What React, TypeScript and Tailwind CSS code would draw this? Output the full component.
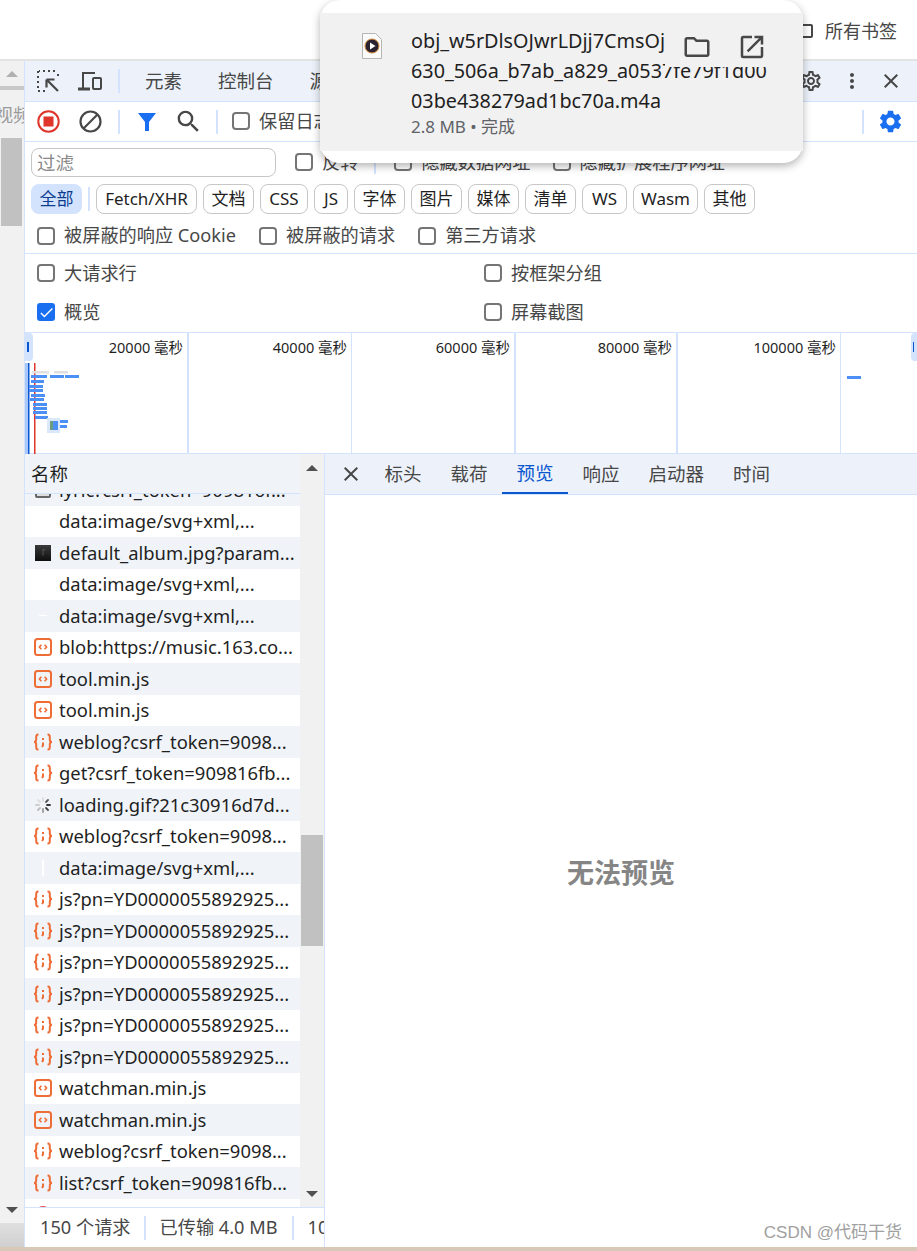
import React from 'react';
import { MdOutlineFolder, MdOpenInNew, MdSettings, MdOutlineSettings, MdClose, MdMoreVert, MdSearch, MdCheck } from 'react-icons/md';

type RowKind = 'none' | 'script' | 'json' | 'album' | 'spin' | 'thumb' | 'dash' | 'vline' | 'red';

const rows: { name: string; kind: RowKind }[] = [
  { name: 'lyric?csrf_token=909816f...', kind: 'thumb' },
  { name: 'data:image/svg+xml,...', kind: 'none' },
  { name: 'default_album.jpg?param...', kind: 'album' },
  { name: 'data:image/svg+xml,...', kind: 'none' },
  { name: 'data:image/svg+xml,...', kind: 'dash' },
  { name: 'blob:https://music.163.co...', kind: 'script' },
  { name: 'tool.min.js', kind: 'script' },
  { name: 'tool.min.js', kind: 'script' },
  { name: 'weblog?csrf_token=9098...', kind: 'json' },
  { name: 'get?csrf_token=909816fb...', kind: 'json' },
  { name: 'loading.gif?21c30916d7d...', kind: 'spin' },
  { name: 'weblog?csrf_token=9098...', kind: 'json' },
  { name: 'data:image/svg+xml,...', kind: 'vline' },
  { name: 'js?pn=YD0000055892925...', kind: 'json' },
  { name: 'js?pn=YD0000055892925...', kind: 'json' },
  { name: 'js?pn=YD0000055892925...', kind: 'json' },
  { name: 'js?pn=YD0000055892925...', kind: 'json' },
  { name: 'js?pn=YD0000055892925...', kind: 'json' },
  { name: 'js?pn=YD0000055892925...', kind: 'json' },
  { name: 'watchman.min.js', kind: 'script' },
  { name: 'watchman.min.js', kind: 'script' },
  { name: 'weblog?csrf_token=9098...', kind: 'json' },
  { name: 'list?csrf_token=909816fb...', kind: 'json' },
  { name: 'obj_84b8705_185b40...m4a', kind: 'red' },
];

const chips = [
  { label: 'Fetch/XHR', width: 'w-[101px]' },
  { label: '文档', width: 'w-[51px]' },
  { label: 'CSS', width: 'w-[48px]' },
  { label: 'JS', width: 'w-[34px]' },
  { label: '字体', width: 'w-[51px]' },
  { label: '图片', width: 'w-[51px]' },
  { label: '媒体', width: 'w-[51px]' },
  { label: '清单', width: 'w-[51px]' },
  { label: 'WS', width: 'w-[45px]' },
  { label: 'Wasm', width: 'w-[65px]' },
  { label: '其他', width: 'w-[51px]' },
];
const ticks = [
  { label: '20000 毫秒', width: 'w-[164px]', line: 'border-r-2' },
  { label: '40000 毫秒', width: 'w-[163px]', line: 'border-r' },
  { label: '60000 毫秒', width: 'w-[164px]', line: 'border-r-2' },
  { label: '80000 毫秒', width: 'w-[162px]', line: 'border-r-2' },
  { label: '100000 毫秒', width: 'w-[163px]', line: 'border-r' },
];
const detailTabs = ['标头', '载荷', '预览', '响应', '启动器', '时间'];

const Check = ({ label, checked }: { label: string; checked?: boolean }) => (
  <label className="flex items-center gap-[9px] whitespace-nowrap text-[18.2px] text-[#474747]">
    {checked ? (
      <span className="flex h-[18px] w-[18px] items-center justify-center rounded-[3px] bg-[#1a6ef0] text-white">
        <MdCheck size={17} />
      </span>
    ) : (
      <span className="h-[18px] w-[18px] rounded-[4px] border-2 border-[#757575]" />
    )}
    <span>{label}</span>
  </label>
);

const Sep = ({ className }: { className: string }) => <div className={`w-[2px] bg-[#d3e3fd] ${className}`} />;

const RowIcon = ({ kind }: { kind: RowKind }) => {
  if (kind === 'script') {
    return (
      <svg width="18" height="18" viewBox="0 0 18 18" fill="none" stroke="#ee6c35">
        <rect x="1" y="1" width="16" height="16" rx="2.5" strokeWidth="2" />
        <path d="M7.4 6.8 5.4 9l2 2.2M10.6 6.8l2 2.2-2 2.2" strokeWidth="1.6" />
      </svg>
    );
  }
  if (kind === 'json') {
    return (
      <svg width="20" height="18" viewBox="0 0 20 18" fill="none" stroke="#ee6c35" strokeWidth="2">
        <path d="M5.5 1.5H5C3.5 1.5 3.2 2.5 3.2 4v2.6C3.2 8 2.4 9 1 9c1.4 0 2.2 1 2.2 2.4V14c0 1.5.3 2.5 1.8 2.5h.5" />
        <path d="M14.5 1.5h.5c1.5 0 1.8 1 1.8 2.5v2.6C16.8 8 17.6 9 19 9c-1.4 0-2.2 1-2.2 2.4V14c0 1.5-.3 2.5-1.8 2.5h-.5" />
        <path d="M10 5v2M10 9.5v3l-1 1.5" />
      </svg>
    );
  }
  if (kind === 'album') {
    return (
      <svg width="16" height="16" viewBox="0 0 16 16">
        <defs>
          <linearGradient id="albumFill" x1="0" y1="0" x2="0" y2="1">
            <stop offset="0" stopColor="#3a3a3a" />
            <stop offset="1" stopColor="#0e0e0e" />
          </linearGradient>
        </defs>
        <rect width="16" height="16" fill="url(#albumFill)" />
        <path d="M8 4v6.5M8 4l2.5 1.5" stroke="#555" strokeWidth="1" fill="none" />
      </svg>
    );
  }
  if (kind === 'spin') {
    return (
      <svg width="16" height="16" viewBox="0 0 16 16" strokeWidth="1.8" strokeLinecap="round">
        <path d="M8 1v3" stroke="#ddd" />
        <path d="M13 3l-2 2" stroke="#555" />
        <path d="M15 8h-3" stroke="#333" />
        <path d="M13 13l-2-2" stroke="#444" />
        <path d="M8 15v-3" stroke="#999" />
        <path d="M3 13l2-2" stroke="#bbb" />
        <path d="M1 8h3" stroke="#ccc" />
        <path d="M3 3l2 2" stroke="#ddd" />
      </svg>
    );
  }
  if (kind === 'thumb') {
    return <div className="h-[16px] w-[16px] rounded-[2px] border-2 border-[#666] bg-[#ddd]" />;
  }
  if (kind === 'dash') {
    return <div className="h-[1px] w-[8px] bg-white" />;
  }
  if (kind === 'vline') {
    return <div className="h-[16px] w-[2px] bg-white" />;
  }
  if (kind === 'red') {
    return <div className="h-[16px] w-[16px] rounded-full bg-[#e5484d]" />;
  }
  return null;
};

const App = () => {
  return (
    <div className="relative flex h-[1251px] w-[917px] flex-col overflow-hidden bg-white font-['Noto_Sans','Noto_Sans_CJK_SC',sans-serif]">
      {/* Browser bar */}
      <div className="flex h-[59px] items-center justify-end pr-[20px] pt-[3px] text-[18px] text-[#474747]">
        <div className="h-[14px] w-[13px] rounded-[2px] border-2 border-[#474747]" />
        <span className="ml-[12px]">所有书签</span>
      </div>
      <div className="h-[2px] bg-[#e3e3e3]" />

      <div className="flex min-h-0 flex-1">
        {/* Page behind devtools */}
        <div className="flex w-[24px] flex-col bg-[#f1f1f1]">
          <div className="mx-auto mt-[10px] h-0 w-0 border-x-[6px] border-b-[6px] border-x-transparent border-b-[#b0b0b0]" />
          <div className="mt-[9px] h-[4px] bg-[#c9c9c9]" />
          <div className="mt-[11px] h-[28px] overflow-hidden whitespace-nowrap text-[18px] leading-[28px] text-[#9a9a9a]">
            <span className="-ml-[5px] block">视频</span>
          </div>
          <div className="ml-[1px] mr-[2px] mt-[9px] h-[88px] bg-[#c1c1c1]" />
          <div className="flex-1" />
          <div className="mx-auto mb-[10px] h-0 w-0 border-x-[6px] border-t-[6px] border-x-transparent border-t-[#505050]" />
          <div className="h-[24px] bg-gradient-to-b from-[#e0e0e0] to-[#cfcfcf]" />
        </div>

        {/* DevTools */}
        <div className="flex min-w-0 flex-1 flex-col border-l border-[#d3e3fd]">
          <div className="flex h-[41px] items-center border-b border-[#d3e3fd] bg-[#edf2fa] pl-[12px] text-[18.5px] text-[#474747]">
            <svg width="23" height="23" viewBox="0 0 23 23" fill="none" stroke="#474747" strokeWidth="2">
              <path d="M1 3V1h2M6 1h2M11 1h2M16 1h2M21 1v0M21 4v2M1 6v2M1 11v2M1 16v2M1 21h2M6 21h2" strokeDasharray="2 1" />
              <path d="M9.5 9.5h8M9.5 9.5v8M9.5 9.5 21 21" strokeWidth="2.2" />
            </svg>
            <svg width="24" height="20" viewBox="0 0 24 20" fill="none" stroke="#474747" strokeWidth="2" className="ml-[18px]">
              <path d="M17 2H5v15" />
              <path d="M0 18h12" strokeWidth="3" />
              <rect x="15" y="7" width="8" height="11" rx="1" />
            </svg>
            <Sep className="ml-[16px] h-[24px]" />
            <span className="ml-[25px]">元素</span>
            <span className="ml-[36px]">控制台</span>
            <span className="ml-[36px]">源代码</span>
            <div className="flex-1" />
            <MdOutlineSettings size={24} className="mr-[17px]" />
            <MdMoreVert size={24} className="mr-[15px]" />
            <MdClose size={24} className="mr-[14px]" />
          </div>

          <div className="flex h-[40px] items-center border-b border-[#d3e3fd] pl-[12px] text-[#474747]">
            <svg width="23" height="23" viewBox="0 0 23 23" fill="none">
              <circle cx="11.5" cy="11.5" r="10.2" stroke="#e0352b" strokeWidth="2" />
              <rect x="6.5" y="6.5" width="10" height="10" fill="#e0352b" />
            </svg>
            <svg width="23" height="23" viewBox="0 0 23 23" fill="none" stroke="#474747" strokeWidth="2.2" className="ml-[19px]">
              <circle cx="11.5" cy="11.5" r="10" />
              <path d="M4.5 18.5 18.5 4.5" />
            </svg>
            <Sep className="ml-[16px] h-[24px]" />
            <svg width="20" height="20" viewBox="0 0 20 20" fill="#1a6ef0" className="ml-[17px]">
              <path d="M1 1h18l-7 9v9H8v-9z" />
            </svg>
            <MdSearch size={29} className="ml-[17px]" />
            <Sep className="ml-[13px] h-[24px]" />
            <div className="ml-[14px]">
              <Check label="保留日志" />
            </div>
            <div className="flex-1" />
            <Sep className="mr-[13px] h-[24px] w-[1px]" />
            <MdSettings size={27} className="mr-[13px] text-[#1a6ef0]" />
          </div>

          <div className="flex h-[41px] items-center pl-[6px]">
            <div className="flex h-[29px] w-[245px] items-center rounded-[8px] border border-[#c4c7c5] pl-[5px] text-[18.5px] text-[#8a8a8a]">过滤</div>
            <div className="ml-[19px]">
              <Check label="反转" />
            </div>
            <Sep className="ml-[16px] h-[22px] w-[1px]" />
            <div className="ml-[18px]">
              <Check label="隐藏数据网址" />
            </div>
            <div className="ml-[22px]">
              <Check label="隐藏扩展程序网址" />
            </div>
          </div>

          <div className="flex h-[31px] items-center gap-[6px] pl-[6px] text-[17px] text-[#1f1f1f]">
            <div className="flex h-[30px] w-[51px] items-center justify-center rounded-[8px] bg-[#d3e3fd] text-[#0b3d91]">全部</div>
            <Sep className="h-[24px]" />
            {chips.map(chip => (
              <div key={chip.label} className={`flex h-[30px] items-center justify-center rounded-[8px] border border-[#c7c7c7] ${chip.width}`}>
                {chip.label}
              </div>
            ))}
          </div>

          <div className="mt-[6px] flex h-[34px] items-center gap-[23px] border-b border-[#d3e3fd] pb-[1px] pl-[12px]">
            <Check label="被屏蔽的响应 Cookie" />
            <Check label="被屏蔽的请求" />
            <Check label="第三方请求" />
          </div>

          <div className="grid h-[79px] grid-cols-[447px_1fr] items-center border-b border-[#d3e3fd] pl-[12px]">
            <Check label="大请求行" />
            <Check label="按框架分组" />
            <Check label="概览" checked />
            <Check label="屏幕截图" />
          </div>

          {/* Overview */}
          <div className="relative flex h-[121px] border-b border-[#d3e3fd]">
            {ticks.map(tick => (
              <div key={tick.label} className={`${tick.width} ${tick.line} h-full shrink-0 border-[#d3e3fd] pt-[4px] pr-[4px] text-right text-[14.5px] text-[#1f1f1f]`}>
                {tick.label}
              </div>
            ))}
            <svg width="892" height="121" viewBox="0 0 892 121" className="absolute left-0 top-0">
              <g transform="translate(0,-1)">
                <rect x="0" y="31" width="3" height="91" fill="#a8c7fa" />
                <rect x="3" y="31" width="1.5" height="91" fill="#0b57d0" />
                <rect x="9" y="31" width="1.5" height="91" fill="#e0352b" />
                <g fill="#e0e0e0">
                  <rect x="7" y="39" width="17" height="2.5" />
                  <rect x="29" y="39" width="14" height="2.5" />
                </g>
                <g fill="#4d90f5">
                  <rect x="6" y="43" width="16" height="3" />
                  <rect x="25" y="43" width="14" height="3" />
                  <rect x="40" y="43" width="14" height="3" />
                  <rect x="6" y="48" width="13" height="3" />
                  <rect x="4" y="53" width="14" height="3" />
                  <rect x="4" y="57" width="14" height="3" />
                  <rect x="6" y="62" width="14" height="3" />
                  <rect x="5" y="66" width="14" height="3" />
                  <rect x="8" y="71" width="14" height="3" />
                  <rect x="8" y="75" width="14" height="3" />
                  <rect x="8" y="79" width="14" height="3" />
                  <rect x="10" y="84" width="13" height="3" />
                  <rect x="35" y="88" width="8" height="3" />
                  <rect x="35" y="93" width="7" height="3" />
                  <rect x="822" y="44" width="14" height="3" />
                </g>
                <rect x="22" y="86" width="13" height="15" fill="#dbe7fb" />
                <rect x="25" y="89" width="3" height="9" fill="#6e9c7e" />
                <rect x="28" y="89" width="5" height="9" fill="#4d90f5" />
              </g>
            </svg>
            <div className="absolute left-0 top-0 flex h-[28px] w-[8px] items-center rounded-r-[4px] bg-[#d3e3fd] pl-[2px]">
              <div className="h-[10px] w-[2px] bg-[#0b57d0]" />
            </div>
            <div className="absolute right-0 top-0 flex h-[28px] w-[6px] items-center rounded-l-[4px] bg-[#d3e3fd] pl-[2px]">
              <div className="h-[10px] w-[1px] bg-[#0b57d0]" />
            </div>
          </div>

          {/* Split view */}
          <div className="flex min-h-0 flex-1">
            <div className="flex w-[300px] shrink-0 flex-col border-r border-[#d3e3fd]">
              <div className="flex min-h-0 flex-1">
                <div className="flex w-[275px] flex-col">
                  <div className="relative z-10 flex h-[40px] shrink-0 items-center border-b border-[#d3e3fd] bg-[#f0f4f9] pl-[6px] text-[18.5px] text-[#1f1f1f]">名称</div>
                  <div className="min-h-0 flex-1 overflow-hidden">
                    <div className="-mt-[20px]">
                      {rows.map((row, i) => (
                        <div key={i} className={`flex h-[31.5px] items-center whitespace-nowrap text-[18.4px] text-[#1f1f1f] ${i % 2 === 0 ? 'bg-[#f0f4f9]' : 'bg-white'}`}>
                          <div className="flex w-[34px] shrink-0 items-center justify-center pl-[2px]">
                            <RowIcon kind={row.kind} />
                          </div>
                          <span>{row.name}</span>
                        </div>
                      ))}
                    </div>
                  </div>
                </div>
                <div className="flex w-[24px] flex-col bg-[#f1f1f1]">
                  <div className="mx-auto mt-[11px] h-0 w-0 border-x-[6px] border-b-[6px] border-x-transparent border-b-[#505050]" />
                  <div className="mx-[1px] mt-[364px] h-[111px] bg-[#c1c1c1]" />
                  <div className="flex-1" />
                  <div className="mx-auto mb-[10px] h-0 w-0 border-x-[6px] border-t-[6px] border-x-transparent border-t-[#505050]" />
                </div>
              </div>
              <div className="flex h-[40px] shrink-0 items-center overflow-hidden whitespace-nowrap border-t border-[#d3e3fd] bg-white pl-[15px] text-[18.2px] text-[#474747]">
                <span>150 个请求</span>
                <Sep className="ml-[13px] h-[24px] w-[1px] shrink-0" />
                <span className="ml-[14px]">已传输 4.0 MB</span>
                <Sep className="ml-[14px] h-[24px] w-[1px] shrink-0" />
                <span className="ml-[14px]">10.8 MB</span>
              </div>
            </div>

            <div className="flex min-w-0 flex-1 flex-col">
              <div className="flex h-[41px] shrink-0 items-stretch border-b border-[#d3e3fd] bg-[#edf2fa] text-[18.5px] text-[#474747]">
                <div className="flex w-[45px] items-center pl-[14px]">
                  <MdClose size={24} />
                </div>
                {detailTabs.map(tab => (
                  <div key={tab} className={`flex items-center px-[14.5px] ${tab === '预览' ? 'border-b-2 border-[#0b57d0] text-[#0b57d0]' : ''}`}>
                    {tab}
                  </div>
                ))}
              </div>
              <div className="flex flex-1 items-center justify-center pt-[4px]">
                <span className="text-[27px] font-bold text-[#858585]">无法预览</span>
              </div>
            </div>
          </div>
        </div>
      </div>
      <div className="h-[4px] bg-[#d8c8b8]" />

      {/* Download bubble */}
      <div className="absolute left-[320px] top-0 h-[163px] w-[483px] rounded-[20px] bg-white pt-[13px] shadow-[0_3px_8px_rgba(0,0,0,0.3)]">
        <div className="relative flex h-[138px] bg-[#f1f1f1] pl-[42px]">
          <svg width="20" height="26" viewBox="0 0 20 26" className="mt-[20px]">
            <path d="M.5.5h13l6 6v19H.5z" fill="#fafafa" stroke="#b5b5b5" />
            <circle cx="10" cy="13" r="7" fill="#2a2230" stroke="#d98b3a" />
            <path d="M8 9.5 13.5 13 8 16.5z" fill="#fff" />
          </svg>
          <div className="ml-[29px] flex-1 overflow-hidden whitespace-nowrap text-[19.8px] leading-[30px] text-[#1f1f1f]">
            <div className="mt-[13px]">obj_w5rDlsOJwrLDjj7CmsOj</div>
            <div>630_506a_b7ab_a829_a0537fe79f1d00</div>
            <div>03be438279ad1bc70a.m4a</div>
            <div className="text-[17px] leading-[22px] text-[#5f6368]">2.8 MB • 完成</div>
          </div>
          <div className="absolute left-[345px] top-0 flex h-[54px] w-[120px] items-end gap-[25px] bg-[#f1f1f1] pl-[17px] pb-[5px] text-[#474747]">
            <MdOutlineFolder size={30} />
            <MdOpenInNew size={30} />
          </div>
        </div>
      </div>

      <div className="absolute bottom-[6px] right-[15px] font-['Liberation_Sans','Noto_Sans_CJK_SC',sans-serif] text-[17px] text-[#a0a0a0]">CSDN @代码干货</div>
    </div>
  );
};

export default App;
